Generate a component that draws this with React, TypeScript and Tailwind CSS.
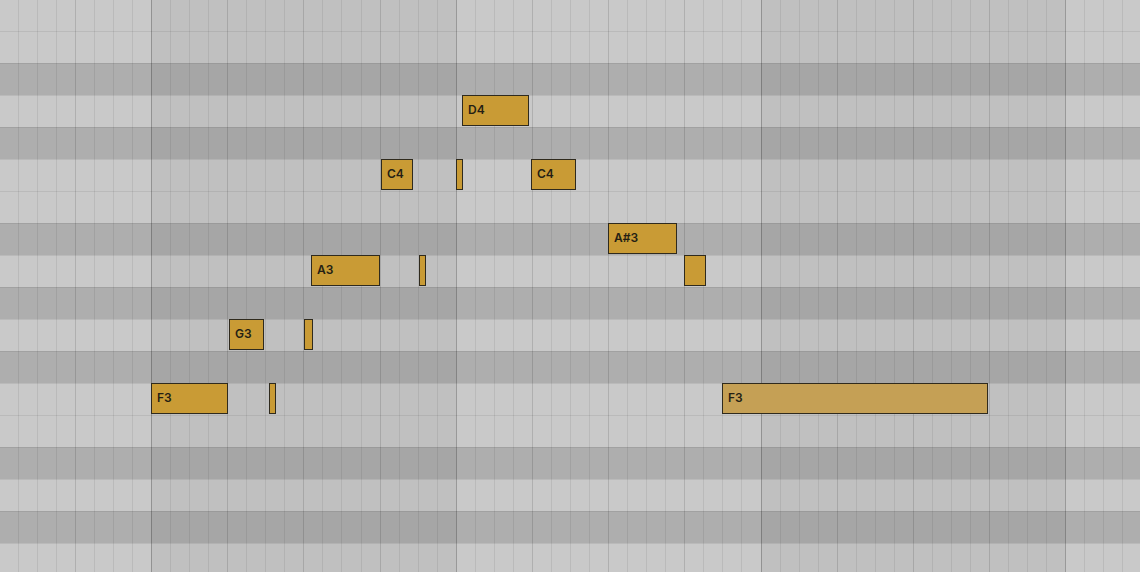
import React from 'react';

// Piano roll clip view: 18 key rows, bars of 16 sixteenths, MIDI notes on top.

const ROW_H = 32;

// top row is F4, going down a semitone per row
const KEYS = ['F4', 'E4', 'D#4', 'D4', 'C#4', 'C4', 'B3', 'A#3', 'A3', 'G#3', 'G3', 'F#3', 'F3', 'E3', 'D#3', 'D3', 'C#3', 'C3'];

interface Note {
  row: number;
  x: number;
  w: number;
  label?: string;
  dim?: boolean;
}

const notes: Note[] = [
  { row: 12, x: 151, w: 77, label: 'F3' },
  { row: 12, x: 269, w: 7 },
  { row: 10, x: 229, w: 35, label: 'G3' },
  { row: 10, x: 304, w: 9 },
  { row: 8, x: 311, w: 69, label: 'A3' },
  { row: 8, x: 419, w: 5 },
  { row: 5, x: 381, w: 32, label: 'C4' },
  { row: 5, x: 456, w: 5 },
  { row: 3, x: 462, w: 67, label: 'D4' },
  { row: 5, x: 531, w: 45, label: 'C4' },
  { row: 7, x: 608, w: 69, label: 'A#3' },
  { row: 8, x: 684, w: 22 },
  { row: 12, x: 722, w: 266, label: 'F3', dim: true },
];

function Bar({ shade }: { shade: boolean }) {
  return (
    <div
      className={`flex shrink-0 w-[304.75px] h-full border-l border-[rgba(0,0,0,0.24)] ${
        shade ? 'bg-[#c0c0c0]' : 'bg-[#c9c9c9]'
      }`}
    >
      {[0, 1, 2, 3].map((beat) => (
        <div key={beat} className={`flex flex-1 h-full ${beat > 0 ? 'border-l border-[rgba(0,0,0,0.13)]' : ''}`}>
          {[0, 1, 2, 3].map((s) => (
            <div key={s} className={`flex-1 h-full ${s > 0 ? 'border-l border-[rgba(0,0,0,0.07)]' : ''}`} />
          ))}
        </div>
      ))}
    </div>
  );
}

export default function App() {
  return (
    <div className="relative w-[1140px] h-[572px] overflow-hidden bg-[#c9c9c9] font-['Inter','Liberation_Sans',sans-serif]">
      {/* bar columns, first bar line sits at x=151 */}
      <div className="flex h-full ml-[-153.75px]">
        {[0, 1, 2, 3, 4].map((i) => (
          <Bar key={i} shade={i % 2 === 1} />
        ))}
      </div>

      {/* key rows */}
      <div className="absolute inset-0 -top-px flex flex-col">
        {KEYS.map((k) => (
          <div
            key={k}
            className={`h-[32px] shrink-0 border-t border-[rgba(0,0,0,0.07)] ${
              k.includes('#') ? 'bg-[rgba(0,0,0,0.135)]' : ''
            }`}
          />
        ))}
      </div>

      {/* notes */}
      {notes.map((n, i) => (
        <div
          key={i}
          className={`absolute h-[30.5px] flex items-center pl-[5px] border-[1.5px] border-[#2f2a1d] text-[12px] font-semibold text-[#241f14] leading-none ${
            n.dim ? 'bg-[#c5a055]' : 'bg-[#c99b35]'
          }`}
          style={{ left: n.x, width: n.w, top: n.row * ROW_H - 1 }}
        >
          {n.label}
        </div>
      ))}
    </div>
  );
}
